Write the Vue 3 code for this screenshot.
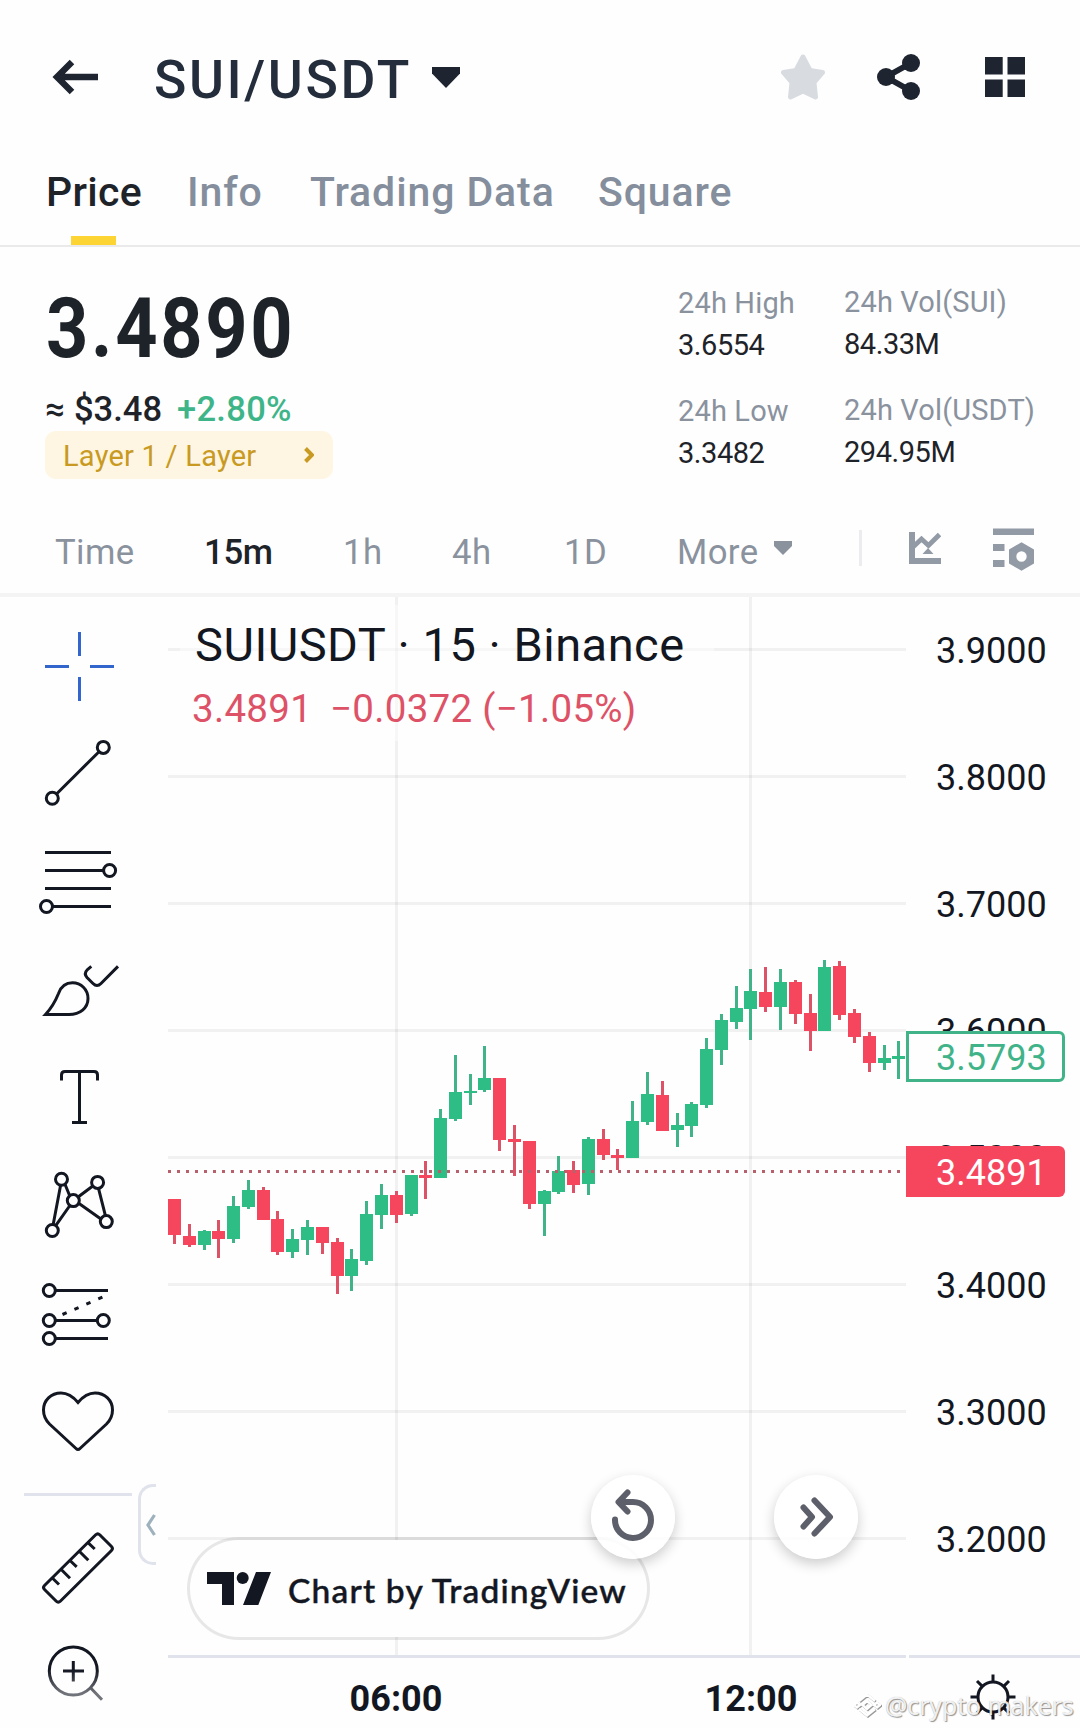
<template>
  <div class="screen">
    <header class="header">
      <svg class="back" viewBox="0 0 46 36">
        <path d="M5 18H46M20 3L5 18L20 33" fill="none" stroke="currentColor" stroke-width="6.4" />
      </svg>
      <h1 class="pair">SUI/USDT</h1>
      <svg class="pair-caret" viewBox="0 0 28 21">
        <path d="M0 0H28V6.5L14 21L0 6.5Z" fill="currentColor" />
      </svg>
      <div class="header-actions">
        <svg class="star" viewBox="0 0 44 46">
          <path
            d="M22 3L29 16.5L41.500 18.500L33 28.500L34.500 43L22 37L9.500 43L11 28.500L2.500 18.500L15 16.500Z"
            fill="currentColor"
            stroke="currentColor"
            stroke-width="5"
            stroke-linejoin="round"
          />
        </svg>
        <svg class="share" viewBox="0 0 43 46">
          <path d="M34 9L9 23L34 37" fill="none" stroke="currentColor" stroke-width="6" />
          <circle cx="9" cy="23" r="9" fill="currentColor" />
          <circle cx="34" cy="9" r="9" fill="currentColor" />
          <circle cx="34" cy="37" r="9" fill="currentColor" />
        </svg>
        <svg class="grid-icon" viewBox="0 0 40 40">
          <path d="M0 0H17.700V17.500H0ZM22.500 0H40V17.500H22.500ZM0 22.500H17.700V40H0ZM22.500 22.500H40V40H22.500Z" fill="currentColor" />
        </svg>
      </div>
    </header>

    <nav class="tabs">
      <div v-for="tab in tabs" :key="tab" class="tab" :class="{ active: tab === activeTab }">
        <span>{{ tab }}</span>
      </div>
    </nav>

    <section class="ticker">
      <div class="ticker-main">
        <div class="last-price">3.4890</div>
        <div class="sub-price">
          <span class="approx">≈</span>
          <span class="fiat">$3.48</span>
          <span class="change">+2.80%</span>
        </div>
        <div class="tag">
          <span class="tag-text">Layer 1 / Layer</span>
          <svg class="tag-arrow" viewBox="0 0 10 16">
            <path d="M1.500 1.500L8 8L1.500 14.500" fill="none" stroke="currentColor" stroke-width="4" />
          </svg>
        </div>
      </div>
      <div class="stats">
        <div v-for="(column, i) in stats" :key="i" class="stats-column">
          <div v-for="stat in column" :key="stat.label" class="stat">
            <div class="stat-label">{{ stat.label }}</div>
            <div class="stat-value">{{ stat.value }}</div>
          </div>
        </div>
      </div>
    </section>

    <section class="intervals">
      <div
        v-for="interval in intervals"
        :key="interval"
        class="interval"
        :class="{ active: interval === activeInterval }"
      >
        {{ interval }}
      </div>
      <div class="interval more">
        More
        <svg class="more-caret" viewBox="0 0 18 14">
          <path d="M0 0H18V5L9 14L0 5Z" fill="currentColor" />
        </svg>
      </div>
      <div class="interval-divider"></div>
      <svg class="indicator-icon" viewBox="0 0 32 32">
        <path d="M3 0V29H32" fill="none" stroke="currentColor" stroke-width="6" />
        <path d="M4 15L12.500 7L19.500 13.500L30.500 2.500" fill="none" stroke="currentColor" stroke-width="4.800" />
        <path d="M19 16L24.500 22H13.500Z" fill="currentColor" />
      </svg>
      <svg class="settings-icon" viewBox="0 0 41 43">
        <path d="M0 0.500H41V7H0ZM0 16H11.500V23H0ZM0 32H11.500V39H0Z" fill="currentColor" />
        <path
          fill-rule="evenodd"
          d="M28.500 14.300L41 21.500V35.500L28.500 42.700L16 35.500V21.500ZM28.500 23.300A5.200 5.200 0 1 0 28.500 33.700A5.200 5.200 0 1 0 28.500 23.300Z"
          fill="currentColor"
        />
      </svg>
    </section>

    <main class="chart">
      <aside class="toolbar">
        <svg class="tool cross" viewBox="0 0 108 108">
          <path d="M21 53.500H45M66 53.500H90M55.500 19V43M55.500 64V88" />
        </svg>
        <svg class="tool" viewBox="0 0 108 108">
          <path d="M32.500 73L75 30.700" />
          <circle cx="79.300" cy="26.400" r="6" />
          <circle cx="28.300" cy="77.300" r="6" />
        </svg>
        <svg class="tool" viewBox="0 0 108 108">
          <path d="M21 23.500H87M21 41.500H79.500M21 59.500H87M28.500 77.500H87" />
          <circle cx="85.600" cy="41.500" r="6" />
          <circle cx="22.500" cy="77.500" r="6" />
        </svg>
        <svg class="tool" viewBox="0 0 108 108">
          <path d="M21.500 77.500C27 71.500 31.500 64 34.500 56.500C37 49.500 42 45.800 48.500 45.800C57 45.800 64 52.500 64 61.500C64 71 56 77.500 45 77.500Z" />
          <path d="M67.300 29.400L63.500 32.500Q59.500 36.500 63 40.500L69 46.500Q73 50.500 77 46.500L94 29.400" />
        </svg>
        <svg class="tool" viewBox="0 0 108 108">
          <path d="M37.500 35.500V30Q37.500 26.500 41 26.500H70Q73.500 26.500 73.500 30V35.500M55.500 26.500V77.500M48 77.500H63" />
        </svg>
        <svg class="tool" viewBox="0 0 108 108">
          <path d="M36.600 32.200L29.200 71.500M41 31.200L45.700 42.700M54.100 44L68.800 33M45.900 52.500L31.700 72.600M54.700 50.300L76.900 65.900M74.500 35.300L81.400 62.700" />
          <circle cx="37.500" cy="26.300" r="6" />
          <circle cx="73.600" cy="29.400" r="6" />
          <circle cx="49.300" cy="47.600" r="6" />
          <circle cx="28.300" cy="77.500" r="6" />
          <circle cx="82.300" cy="68.600" r="6" />
        </svg>
        <svg class="tool" viewBox="0 0 108 108">
          <path d="M31.300 29.500H84M31.300 59.500H73.300M31.300 77.500H84" />
          <path d="M38.500 53.500L80 35.500" stroke-dasharray="4.500 8.500" />
          <circle cx="25.300" cy="29.500" r="6" />
          <circle cx="25.300" cy="59.500" r="6" />
          <circle cx="79.300" cy="59.500" r="6" />
          <circle cx="25.300" cy="77.500" r="6" />
        </svg>
        <svg class="tool" viewBox="0 0 108 108">
          <path d="M54 33.500C49 27.500 43 24 37 24C27 24 19.500 31.500 19.500 41Q19.500 49 25.500 55L52 79.500Q54 81.500 56 79.500L82.500 55Q88.500 49 88.500 41C88.500 31.500 81 24 71 24C65 24 59 27.500 54 33.500Z" />
        </svg>
        <div class="toolbar-divider"></div>
        <svg class="tool" viewBox="0 0 108 108">
          <path d="M71.700 20.800Q73.700 18.800 75.700 20.800L87.500 32.500Q89.500 34.500 87.500 36.500L36.300 87.200Q34.300 89.200 32.300 87.200L20.500 75.500Q18.500 73.500 20.500 71.500Z" />
          <path d="M28.300 64L35 70.500M37 55.300L46 64.300M46 46.500L52.700 52.800M55.300 37.300L64.300 46.300M64 28.600L70.700 35" />
        </svg>
        <svg class="tool zoom" viewBox="0 0 108 108">
          <circle cx="49.300" cy="49" r="24" />
          <path d="M49.300 39V59.500M39 49H60M66.700 66L78 77.700" />
        </svg>
        <div class="toolbar-fade"></div>
        <div class="toolbar-handle">
          <svg viewBox="0 0 10 22">
            <path d="M8.500 1L2 11L8.500 21" fill="none" stroke="currentColor" stroke-width="3.200" />
          </svg>
        </div>
      </aside>

      <div class="pane">
        <svg class="plot" viewBox="168 597 738 1058" shape-rendering="crispEdges">
          <g class="grid-lines">
            <rect v-for="price in priceTicks" :key="price" x="168" :y="priceY(price)" width="738" height="3" />
            <rect v-for="x in timeTicks" :key="x" :x="x" y="597" width="3" height="1058" />
          </g>
          <g v-for="c in candles" :key="c.x" :class="c.side">
            <rect class="wick" :x="c.x + 5" :y="c.high" width="3" :height="c.low - c.high" />
            <rect class="body" :x="c.x" :y="c.top" width="13" :height="c.bottom - c.top" />
          </g>
          <path class="last-line" d="M168 1171.500H903" />
        </svg>

        <div class="legend">
          <div class="legend-title">SUIUSDT · 15 · Binance</div>
          <div class="legend-values">
            <span class="legend-last">3.4891</span>
            <span>−0.0372 (−1.05%)</span>
          </div>
        </div>

        <div class="attribution">
          <svg class="tv-logo" viewBox="0 0 64 33">
            <path d="M0 0H27V33H15V12H0ZM49 0H64L51.300 33H36Z" fill="currentColor" />
            <circle cx="35.700" cy="6" r="6" fill="currentColor" />
          </svg>
          <span class="attribution-text">Chart by TradingView</span>
        </div>

        <button class="round-button reset">
          <svg viewBox="0 0 84 84">
            <path d="M24 44.500A18 18 0 1 0 42 27H28M36.500 17.500L27.500 27L36.500 36.500" />
          </svg>
        </button>
        <button class="round-button forward">
          <svg viewBox="0 0 84 84">
            <path d="M29.500 32.500L38 42L29.500 51.500M40.500 25.500L56 42L40.500 58.500" />
          </svg>
        </button>

        <div class="time-axis">
          <span class="time-label first">06:00</span>
          <span class="time-label second">12:00</span>
        </div>
      </div>

      <div class="price-axis">
        <div class="price-labels">
          <div v-for="price in priceTicks" :key="price" class="price-label">{{ price.toFixed(4) }}</div>
        </div>
        <div class="price-tag outline">3.5793</div>
        <div class="price-tag last">3.4891</div>
        <div class="axis-corner">
          <svg class="sun" viewBox="-24 -24 48 48">
            <circle r="15" />
            <path d="M0 -22.500V-15M0 15V22.500M-22.500 0H-15M15 0H22.500M-16 -16L-10.600 -10.600M16 -16L10.600 -10.600M-16 16L-10.600 10.600M16 16L10.600 10.600" />
          </svg>
        </div>
      </div>
    </main>

    <div class="watermark">
      <svg class="watermark-logo" viewBox="0 0 28 24">
        <path d="M6 8L14 1.500L22 8M6 16L14 22.500L22 16M9.500 12L14 8L18.500 12L14 16ZM1 12L4 9.500L7 12L4 14.500ZM21 12L24 9.500L27 12L24 14.500Z" />
      </svg>
      <span>@crypto makers</span>
    </div>
  </div>
</template>

<script setup>
import { ref } from 'vue'

const tabs = ['Price', 'Info', 'Trading Data', 'Square']
const activeTab = ref('Price')

const intervals = ['Time', '15m', '1h', '4h', '1D']
const activeInterval = ref('15m')

const stats = [
  [
    { label: '24h High', value: '3.6554' },
    { label: '24h Low', value: '3.3482' }
  ],
  [
    { label: '24h Vol(SUI)', value: '84.33M' },
    { label: '24h Vol(USDT)', value: '294.95M' }
  ]
]

const priceTicks = [3.9, 3.8, 3.7, 3.6, 3.5, 3.4, 3.3, 3.2]
const timeTicks = [395, 749]

const priceY = (price) => Math.round(648 + (3.9 - price) * 1270)

// x, body top, body bottom, high, low, side
const candles = [
  [168, 1199, 1235, 1199, 1244, 'down'],
  [183, 1236, 1245, 1224, 1247, 'down'],
  [198, 1231, 1245, 1230, 1250, 'up'],
  [212, 1231, 1239, 1220, 1258, 'down'],
  [227, 1206, 1239, 1196, 1243, 'up'],
  [242, 1190, 1207, 1180, 1209, 'up'],
  [257, 1190, 1220, 1187, 1220, 'down'],
  [271, 1219, 1252, 1211, 1255, 'down'],
  [286, 1239, 1252, 1229, 1258, 'up'],
  [301, 1227, 1240, 1220, 1255, 'up'],
  [316, 1227, 1243, 1227, 1254, 'down'],
  [331, 1242, 1276, 1238, 1294, 'down'],
  [345, 1259, 1276, 1249, 1291, 'up'],
  [360, 1214, 1261, 1201, 1265, 'up'],
  [375, 1195, 1215, 1184, 1229, 'up'],
  [390, 1195, 1215, 1191, 1223, 'down'],
  [405, 1175, 1214, 1175, 1216, 'up'],
  [419, 1175, 1178, 1161, 1199, 'down'],
  [434, 1118, 1178, 1109, 1178, 'up'],
  [449, 1092, 1119, 1055, 1121, 'up'],
  [464, 1091, 1093, 1074, 1105, 'up'],
  [478, 1078, 1090, 1046, 1092, 'up'],
  [493, 1078, 1140, 1078, 1151, 'down'],
  [508, 1139, 1142, 1125, 1176, 'down'],
  [523, 1141, 1204, 1141, 1209, 'down'],
  [538, 1191, 1204, 1190, 1236, 'up'],
  [552, 1171, 1192, 1156, 1194, 'up'],
  [567, 1170, 1185, 1161, 1193, 'down'],
  [582, 1139, 1184, 1137, 1195, 'up'],
  [597, 1139, 1155, 1129, 1160, 'down'],
  [611, 1155, 1158, 1149, 1170, 'down'],
  [626, 1121, 1158, 1101, 1158, 'up'],
  [641, 1094, 1122, 1072, 1125, 'up'],
  [656, 1095, 1131, 1081, 1131, 'down'],
  [671, 1125, 1130, 1113, 1147, 'up'],
  [685, 1104, 1126, 1102, 1137, 'up'],
  [700, 1049, 1105, 1038, 1108, 'up'],
  [715, 1020, 1050, 1014, 1065, 'up'],
  [730, 1008, 1022, 986, 1029, 'up'],
  [744, 991, 1009, 969, 1040, 'up'],
  [759, 992, 1007, 967, 1012, 'down'],
  [774, 982, 1007, 969, 1030, 'up'],
  [789, 982, 1014, 980, 1024, 'down'],
  [804, 1013, 1031, 994, 1051, 'down'],
  [818, 967, 1031, 960, 1031, 'up'],
  [833, 966, 1015, 961, 1020, 'down'],
  [848, 1013, 1037, 1009, 1043, 'down'],
  [863, 1036, 1063, 1032, 1072, 'down'],
  [878, 1058, 1063, 1045, 1070, 'up'],
  [892, 1056, 1059, 1041, 1079, 'up']
].map(([x, top, bottom, high, low, side]) => ({ x, top, bottom, high, low, side }))
</script>

<style>
body {
  background: #fefefe;
}
</style>

<style scoped>
.screen {
  position: relative;
  display: flex;
  flex-direction: column;
  width: 1080px;
  height: 1728px;
  overflow: hidden;
  background: #fefefe;
  color: #1e2329;
  font-family: Roboto, 'Liberation Sans', sans-serif;
}

.screen svg {
  display: block;
  flex-shrink: 0;
}

/* header */
.header {
  display: flex;
  align-items: center;
  height: 154px;
  padding: 0 55px 0 52px;
  box-sizing: border-box;
  color: #1e2530;
}

.back {
  width: 46px;
  height: 36px;
}

.pair {
  margin: 5px 0 0 56px;
  width: 278px;
  font-size: 53.5px;
  line-height: 60px;
  font-weight: 500;
  letter-spacing: 2.6px;
  color: #242d3c;
}

.pair-caret {
  width: 28px;
  height: 21px;
}

.header-actions {
  display: flex;
  align-items: center;
  margin-left: auto;
}

.star {
  width: 44px;
  height: 46px;
  color: #d8dce1;
}

.share {
  width: 43px;
  height: 46px;
  margin-left: 52px;
}

.grid-icon {
  width: 40px;
  height: 40px;
  margin-left: 65px;
}

/* tabs */
.tabs {
  display: grid;
  grid-template-columns: 141px 123px 288px auto;
  justify-content: start;
  height: 91px;
  padding-left: 46px;
  border-bottom: 2px solid #eaeaea;
}

.tab {
  display: flex;
  flex-direction: column;
  align-items: center;
  justify-self: start;
  font-size: 41px;
  line-height: 77px;
  font-weight: 500;
  letter-spacing: 0.9px;
  color: #848e9c;
  white-space: nowrap;
}

.tab.active {
  color: #1e2329;
  letter-spacing: 0.3px;
}

.tab.active::after {
  content: '';
  width: 45px;
  height: 9px;
  margin-top: 5px;
  background: #fcd535;
}

/* ticker */
.ticker {
  display: flex;
  justify-content: space-between;
  height: 263px;
  padding-left: 45px;
}

.ticker-main {
  padding-top: 40px;
}

.last-price {
  margin-left: 1px;
  font-size: 83px;
  line-height: 84px;
  font-weight: 700;
  letter-spacing: 3px;
  transform: scaleX(0.89);
  transform-origin: left;
}

.sub-price {
  display: flex;
  margin-top: 14px;
  font-size: 34.5px;
  line-height: 48px;
  height: 46px;
  font-weight: 500;
}

.approx {
  width: 29px;
}

.fiat {
  width: 103px;
}

.change {
  color: #3db588;
  letter-spacing: 0.3px;
}

.tag {
  display: flex;
  align-items: center;
  justify-content: space-between;
  width: 288px;
  height: 48px;
  padding: 0 19px 0 18px;
  box-sizing: border-box;
  border-radius: 11px;
  background: #fef6e3;
  color: #c99a22;
  font-size: 29px;
  letter-spacing: 0.25px;
}

.tag-text {
  padding-top: 2px;
}

.tag-arrow {
  width: 10px;
  height: 16px;
}

.stats {
  display: flex;
  width: 402px;
  padding-top: 35px;
  font-size: 29px;
  line-height: 42px;
}

.stats-column {
  display: flex;
  flex-direction: column;
  gap: 24px;
  width: 166px;
  flex-shrink: 0;
  white-space: nowrap;
}

.stats-column + .stats-column {
  margin-top: -1px;
}

.stat-label {
  color: #8a929e;
  letter-spacing: 0.15px;
}

.stat-value {
  letter-spacing: -0.45px;
}

/* intervals */
.intervals {
  display: grid;
  grid-template-columns: 149px 139px 109px 112px 113px 182px 50px 84px 41px;
  align-items: center;
  height: 83px;
  padding-left: 55px;
  border-bottom: 4px solid #f4f4f4;
  font-size: 34.7px;
  letter-spacing: 0.4px;
  color: #8a929e;
}

.interval.active {
  color: #1e2329;
  font-weight: 500;
  letter-spacing: -0.3px;
}

.more {
  display: flex;
  align-items: center;
  gap: 15px;
}

.more-caret {
  width: 18px;
  height: 14px;
  margin-top: -7px;
}

.interval-divider {
  width: 3px;
  height: 36px;
  margin-top: -7px;
  background: #eaecef;
}

.indicator-icon {
  width: 32px;
  height: 32px;
  margin-top: -7px;
  color: #929aa5;
}

.settings-icon {
  width: 41px;
  height: 43px;
  margin-top: -5px;
  color: #929aa5;
}

/* chart */
.chart {
  display: flex;
  flex: 1;
  min-height: 0;
  color: #131722;
}

.toolbar {
  position: relative;
  width: 144px;
  padding: 16px 0 0 24px;
  box-sizing: border-box;
  margin-right: 24px;
  flex-shrink: 0;
}

.tool {
  width: 108px;
  height: 108px;
  fill: none;
  stroke: #131722;
  stroke-width: 3;
}

.cross {
  stroke: #3366cc;
}

.toolbar-divider {
  width: 108px;
  height: 3px;
  margin: 16px 0 18px;
  background: #e0e3eb;
}

.toolbar-fade {
  position: absolute;
  left: 0;
  right: 0;
  bottom: 0;
  height: 58px;
  background: linear-gradient(rgba(254, 254, 254, 0), rgba(254, 254, 254, 0.4) 40%, rgba(254, 254, 254, 0.4));
}

.toolbar-handle {
  position: absolute;
  left: 138px;
  top: 887px;
  width: 18px;
  height: 81px;
  box-sizing: border-box;
  display: flex;
  align-items: center;
  justify-content: flex-end;
  border: 3px solid #e0e3eb;
  border-right: 0;
  border-radius: 15px 0 0 15px;
  color: #9db2bd;
}

.toolbar-handle svg {
  width: 10px;
  height: 22px;
}

.pane {
  position: relative;
  width: 738px;
  flex-shrink: 0;
}

.plot {
  width: 738px;
  height: 1058px;
}

.grid-lines rect {
  fill: rgba(0, 0, 0, 0.05);
}

.up .body {
  fill: #2ebd85;
}

.up .wick {
  fill: #40b388;
}

.down .body {
  fill: #f6465d;
}

.down .wick {
  fill: #dc5267;
}

.last-line {
  fill: none;
  stroke: #b8606c;
  stroke-width: 3;
  stroke-dasharray: 3 6;
}

.legend {
  position: absolute;
  left: 12px;
  top: 8px;
  width: 534px;
  height: 136px;
  padding-left: 15px;
  box-sizing: border-box;
  background: rgba(254, 254, 254, 0.5);
  white-space: nowrap;
}

.legend-title {
  padding-top: 10px;
  font-size: 47px;
  line-height: 60px;
  letter-spacing: 0.5px;
}

.legend-values {
  display: flex;
  margin-left: -3px;
  padding-top: 9px;
  font-size: 38.5px;
  line-height: 50px;
  letter-spacing: 0.3px;
  color: #dd5267;
}

.legend-last {
  width: 138px;
}

.attribution {
  position: absolute;
  left: 19px;
  top: 940px;
  width: 463px;
  height: 103px;
  box-sizing: border-box;
  display: flex;
  align-items: center;
  gap: 17px;
  padding-left: 17px;
  border: 3px solid rgba(0, 0, 0, 0.09);
  border-radius: 52px;
  background: #fefefe;
  background-clip: padding-box;
  font-family: Lato, 'Liberation Sans', sans-serif;
  font-size: 33.5px;
  font-weight: 500;
  letter-spacing: 1.2px;
  white-space: nowrap;
}

.attribution-text {
  padding-top: 2px;
  -webkit-text-stroke: 0.5px #131722;
}

.tv-logo {
  width: 64px;
  height: 33px;
}

.round-button {
  position: absolute;
  top: 878px;
  width: 84px;
  height: 84px;
  padding: 0;
  border: 0;
  border-radius: 50%;
  background: rgba(255, 255, 255, 0.85);
  box-shadow: 0 5px 13px rgba(0, 0, 0, 0.2);
}

.round-button svg {
  fill: none;
  stroke: #5d606b;
  stroke-width: 6;
  stroke-linecap: round;
  stroke-linejoin: round;
}

.reset {
  left: 423px;
}

.forward {
  left: 606px;
}

.time-axis {
  display: flex;
  height: 73px;
  box-sizing: border-box;
  border-top: 3px solid #e0e3eb;
  font-size: 36px;
  line-height: 83px;
  font-weight: 700;
}

.time-label {
  width: 120px;
  text-align: center;
}

.first {
  margin-left: 168px;
}

.second {
  margin-left: 235px;
}

.price-axis {
  position: relative;
  display: flex;
  flex-direction: column;
  width: 174px;
  overflow: hidden;
}

.price-labels {
  height: 1058px;
  overflow: hidden;
}

.price-label {
  height: 127px;
  padding-left: 30px;
  font-size: 36px;
  line-height: 127px;
}

.price-label:first-child {
  margin-top: -9px;
}

.price-tag {
  position: absolute;
  left: 0;
  width: 159px;
  height: 51px;
  padding-left: 30px;
  box-sizing: border-box;
  border-radius: 0 6px 6px 0;
  font-size: 36px;
  line-height: 54px;
}

.outline {
  top: 434px;
  padding-left: 27px;
  border: 3px solid #40b388;
  background: #fefefe;
  color: #40b388;
  line-height: 48px;
}

.last {
  top: 549px;
  background: #f6465d;
  color: #fff;
}

.axis-corner {
  height: 73px;
  box-sizing: border-box;
  margin-left: 3px;
  padding: 15px 0 0 60px;
  border-top: 3px solid #e0e3eb;
}

.sun {
  width: 48px;
  height: 48px;
  fill: none;
  stroke: #131722;
  stroke-width: 3;
}

.watermark {
  position: absolute;
  left: 853px;
  bottom: 3px;
  display: flex;
  align-items: center;
  gap: 4px;
  font-family: 'Noto Sans', sans-serif;
  font-size: 25px;
  line-height: 40px;
  letter-spacing: -0.15px;
  color: rgba(255, 255, 255, 0.9);
  text-shadow: 1px 1px 1px rgba(0, 0, 0, 0.4), 0 0 1px rgba(0, 0, 0, 0.3);
  white-space: nowrap;
}

.watermark-logo {
  width: 28px;
  height: 24px;
  fill: none;
  stroke: #fff;
  stroke-width: 2.4;
  filter: drop-shadow(1px 1px 0.5px rgba(0, 0, 0, 0.4));
}
</style>
